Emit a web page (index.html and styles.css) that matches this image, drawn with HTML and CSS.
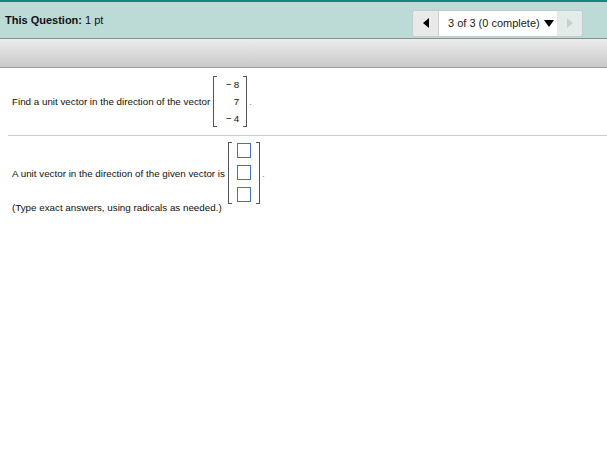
FILE: index.html
```html
<!DOCTYPE html>
<html lang="en">
<head>
    <meta charset="UTF-8">
    <title>Question</title>
    <link rel="stylesheet" href="styles.css">
</head>
<body>
    <div class="header">
        <div class="points"><b>This Question:</b> 1 pt</div>
        <div class="nav">
            <span class="nav-btn prev"><span class="tri-left"></span></span>
            <span class="nav-label">3 of 3 (0 complete) <span class="tri-down"></span></span>
            <span class="nav-btn next"><span class="tri-right"></span></span>
        </div>
    </div>
    <div class="toolbar"></div>

    <div class="content">
        <div class="row question">
            <span>Find a unit vector in the direction of the vector</span>
            <span class="matrix given">
                <span class="bracket left"></span>
                <span class="cells">
                    <span class="cell">&minus;&thinsp;8</span>
                    <span class="cell">7</span>
                    <span class="cell">&minus;&thinsp;4</span>
                </span>
                <span class="bracket right"></span>
            </span>
            <span class="dot">.</span>
        </div>
        <hr class="sep">
        <div class="row answer">
            <span>A unit vector in the direction of the given vector is</span>
            <span class="matrix inputs">
                <span class="bracket left"></span>
                <span class="cells">
                    <span class="box"></span>
                    <span class="box"></span>
                    <span class="box"></span>
                </span>
                <span class="bracket right"></span>
            </span>
            <span class="dot">.</span>
        </div>
        <p class="hint">(Type exact answers, using radicals as needed.)</p>
    </div>
</body>
</html>
```

FILE: styles.css
```css
body {
    margin: 0;
    font-family: "Liberation Sans", Arial, sans-serif;
    color: #111;
    background: #fff;
}
.header {
    display: flex;
    align-items: center;
    justify-content: space-between;
    height: 36px;
    border-top: 2px solid #11897a;
    background-color: #bcdad6;
    padding: 0 25px 0 5px;
    font-size: 11px;
    color: #111;
}
.nav {
    display: flex;
    height: 25px;
    margin-top: 6px;
    border-radius: 3px;
    box-shadow: 0 0 0 1px #c4cccb;
    background: #fff;
}
.nav-btn {
    display: flex;
    align-items: center;
    justify-content: center;
    width: 25px;
    background: #e9e9e9;
}
.prev {
    border-radius: 3px 0 0 3px;
    border-right: 1px solid #cfcfcf;
}
.next {
    width: 25px;
    background: #e4ecea;
    border-radius: 0 3px 3px 0;
}
.nav-label {
    display: flex;
    align-items: center;
    width: 109px;
    padding-left: 9px;
    font-size: 11px;
    color: #222;
}
.tri-left {
    border-right: 6px solid #000;
    border-top: 5px solid transparent;
    border-bottom: 5px solid transparent;
}
.tri-right {
    border-left: 6px solid #c7d2d0;
    border-top: 5px solid transparent;
    border-bottom: 5px solid transparent;
}
.tri-down {
    display: inline-block;
    margin-left: 4px;
    border-top: 7px solid #000;
    border-left: 5px solid transparent;
    border-right: 5px solid transparent;
}
.toolbar {
    height: 28px;
    border-top: 1px solid #8e8e8e;
    border-bottom: 1px solid #9a9a9a;
    background: linear-gradient(#ececec, #c9c9c9);
}
.content {
    padding: 8px 0 0 8px;
    font-size: 9.8px;
}
.row {
    display: flex;
    align-items: center;
    padding-left: 4px;
}
.matrix {
    display: flex;
    margin-left: 3px;
}
.bracket {
    width: 3px;
    border: 1px solid #555;
}
.bracket.left {
    border-right: none;
}
.bracket.right {
    border-left: none;
}
.cells {
    display: flex;
    flex-direction: column;
}
.given .cells {
    width: 22px;
    padding: 0 4px 0 0;
    align-items: flex-end;
}
.cell {
    height: 17px;
    line-height: 17px;
}
.inputs {
    margin-left: 3px;
}
.inputs .cells {
    padding: 1px 5px 2px 5px;
    gap: 7px;
}
.box {
    width: 12px;
    height: 13px;
    border: 1px solid #3f6fcf;
}
.dot {
    margin-left: 2px;
    color: #888;
}
.sep {
    margin: 8px 0 6px 0;
    border: none;
    border-top: 1px solid #cccccc;
}
.hint {
    margin: -2px 0 0 4px;
}
```
